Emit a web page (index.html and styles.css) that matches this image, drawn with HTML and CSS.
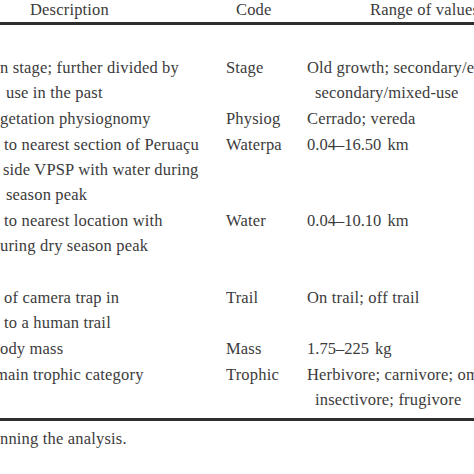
FILE: index.html
```html
<!DOCTYPE html>
<html>
<head>
<meta charset="utf-8">
<link rel="stylesheet" href="styles.css">
</head>
<body>
<div class="page">
  <div class="head row">
    <div class="cell desc"><span class="h-desc">Description</span></div>
    <div class="cell code"><span class="h-code">Code</span></div>
    <div class="cell range"><span class="h-range">Range of values</span></div>
  </div>
  <div class="rule"></div>
  <div class="rows">
    <div class="row blank"></div>
    <div class="row">
      <div class="cell desc"><span class="ln">n stage; further divided by</span><span class="ln in6">use in the past</span></div>
      <div class="cell code"><span class="ln">Stage</span></div>
      <div class="cell range"><span class="ln">Old growth; secondary/early</span><span class="ln hang">secondary/mixed-use</span></div>
    </div>
    <div class="row">
      <div class="cell desc"><span class="ln">getation physiognomy</span></div>
      <div class="cell code"><span class="ln">Physiog</span></div>
      <div class="cell range"><span class="ln">Cerrado; vereda</span></div>
    </div>
    <div class="row">
      <div class="cell desc"><span class="ln in4">to nearest section of Peruaçu</span><span class="ln in3">side VPSP with water during</span><span class="ln in6">season peak</span></div>
      <div class="cell code"><span class="ln">Waterpa</span></div>
      <div class="cell range"><span class="ln num">0.04–16.50 km</span></div>
    </div>
    <div class="row">
      <div class="cell desc"><span class="ln in4">to nearest location with</span><span class="ln">uring dry season peak</span></div>
      <div class="cell code"><span class="ln">Water</span></div>
      <div class="cell range"><span class="ln num">0.04–10.10 km</span></div>
    </div>
    <div class="row blank"></div>
    <div class="row">
      <div class="cell desc"><span class="ln in4">of camera trap in</span><span class="ln in4">to a human trail</span></div>
      <div class="cell code"><span class="ln">Trail</span></div>
      <div class="cell range"><span class="ln">On trail; off trail</span></div>
    </div>
    <div class="row">
      <div class="cell desc"><span class="ln">ody mass</span></div>
      <div class="cell code"><span class="ln">Mass</span></div>
      <div class="cell range"><span class="ln num">1.75–225 kg</span></div>
    </div>
    <div class="row">
      <div class="cell desc"><span class="ln cut">main trophic category</span></div>
      <div class="cell code"><span class="ln">Trophic</span></div>
      <div class="cell range"><span class="ln">Herbivore; carnivore; omnivore;</span><span class="ln hang">insectivore; frugivore</span></div>
    </div>
  </div>
  <div class="rule bottom"></div>
  <p class="note">nning the analysis.</p>
</div>
</body>
</html>
```
FILE: styles.css
```css
html, body {
  margin: 0;
  padding: 0;
  background: #ffffff;
}
body {
  width: 474px;
  height: 474px;
  overflow: hidden;
  font-family: "Liberation Serif", "Times New Roman", serif;
  font-size: 16.5px;
  line-height: 25px;
  letter-spacing: 0.18px;
  color: #3b3b3b;
}
.page {
  margin-top: -3px;
  white-space: nowrap;
}
.row {
  display: grid;
  grid-template-columns: 226px 81px 1fr;
}
.cell {
  display: flex;
  flex-direction: column;
  overflow: hidden;
}
.range {
  overflow: visible;
}
.ln {
  display: block;
  height: 25px;
}
.num {
  letter-spacing: 0;
  word-spacing: 2px;
}
.in3 { padding-left: 3px; }
.in4 { padding-left: 4px; }
.in6 { padding-left: 6px; }
.cut { margin-left: -5px; }
.hang { padding-left: 8px; }
.h-desc { padding-left: 30px; }
.h-code { padding-left: 10px; }
.h-range { padding-left: 63px; }
.rule {
  margin-top: 0;
  height: 3px;
  background: #2e2e2e;
}
.rows {
  display: flex;
  flex-direction: column;
  gap: 1px;
  padding-top: 4px;
}
.blank {
  height: 25px;
}
.rule.bottom {
  margin-top: 6px;
}
.note {
  margin: 5px 0 0 0;
}
```
